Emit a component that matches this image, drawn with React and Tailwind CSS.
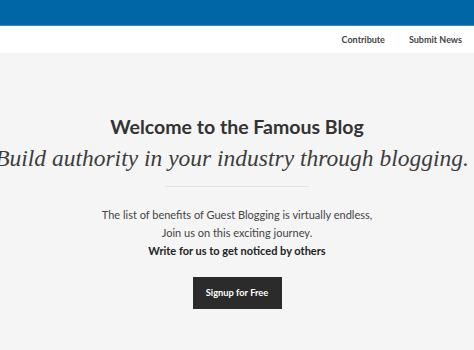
import React from "react";

const sans = { fontFamily: "Lato, 'Noto Sans', sans-serif" };

export default function App() {
  return (
    <div className="w-[474px] h-[350px] overflow-hidden bg-[#f5f5f5]" style={sans}>
      {/* ================= TOP BAR ================= */}
      <div className="h-[26px] bg-[#0066a6] border-b border-[#3a86bd]" />

      {/* ================= NAV ================= */}
      <nav className="h-[27px] bg-white flex items-center justify-end gap-[24px] pr-[12px] text-[9px] font-bold text-[#444]">
        <a href="#">Contribute</a>
        <a href="#">Submit News</a>
      </nav>

      {/* ================= HERO ================= */}
      <section className="flex flex-col items-center text-center pt-[61px]">
        <h1 className="text-[19.5px] leading-[26px] font-bold text-[#333]">
          Welcome to the Famous Blog
        </h1>
        <p
          className="mt-[4px] mr-[10px] text-[23.5px] leading-[28px] italic text-[#3d3d3d] whitespace-nowrap"
          style={{ fontFamily: "'Liberation Serif', Georgia, serif" }}
        >
          Build authority in your industry through blogging.
        </p>
        <div className="mt-[14px] w-[144px] h-px bg-[#e3e3e3]" />

        <div className="mt-[19px] text-[11px] leading-[18px] text-[#444]">
          <p>The list of benefits of Guest Blogging is virtually endless,</p>
          <p>Join us on this exciting journey.</p>
          <p className="font-bold text-[#222]">Write for us to get noticed by others</p>
        </div>

        <button className="mt-[17px] w-[89px] h-[32px] bg-[#2b2b2b] text-white text-[9.3px] font-bold">
          Signup for Free
        </button>
      </section>
    </div>
  );
}
